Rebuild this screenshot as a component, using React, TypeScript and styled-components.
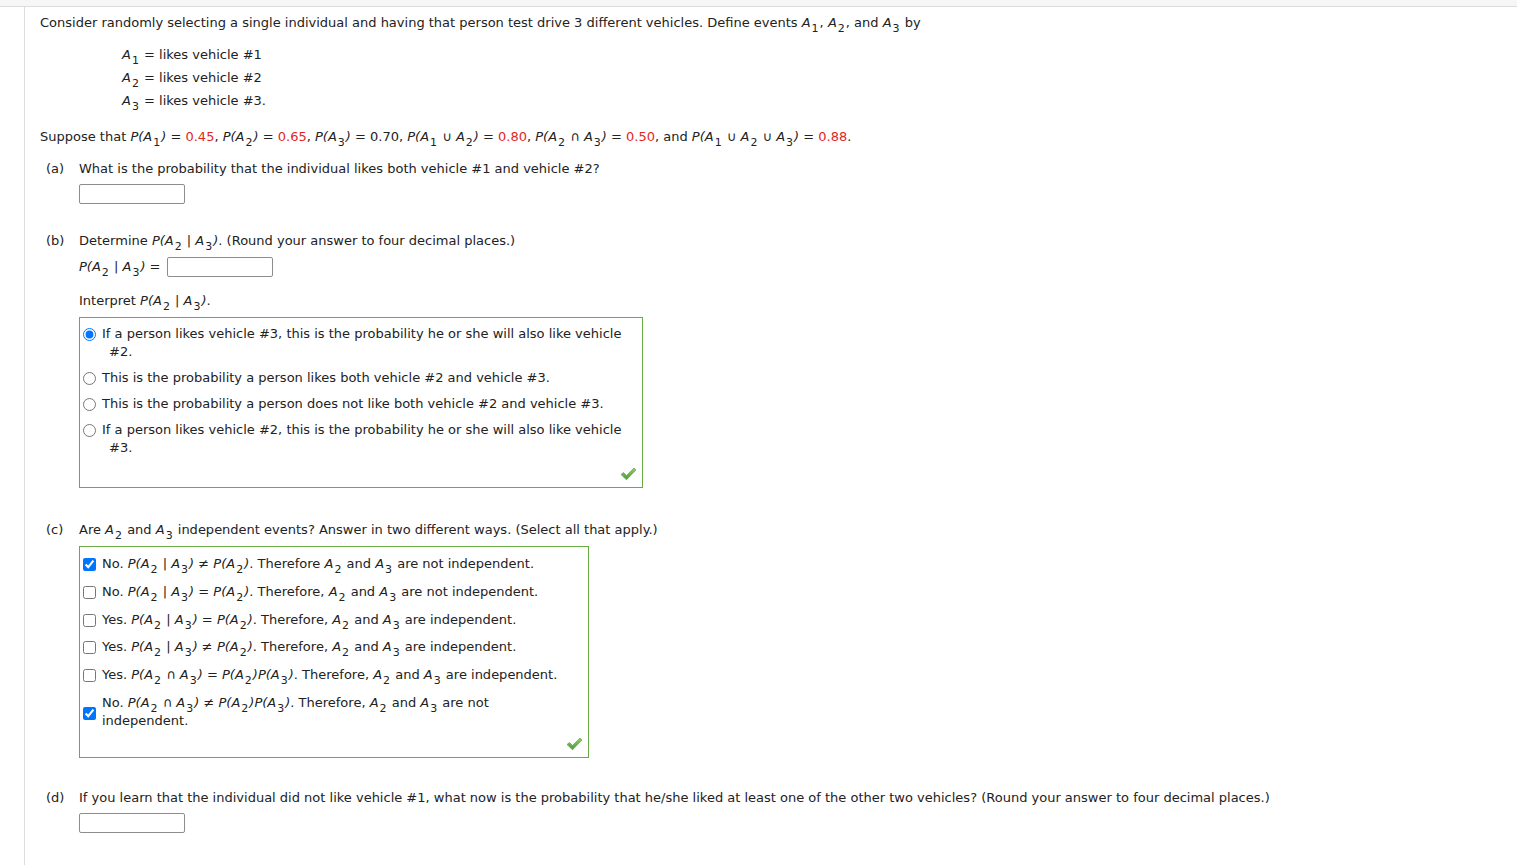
import React from 'react';
import styled, { createGlobalStyle } from 'styled-components';

const GlobalStyle = createGlobalStyle`
  html, body {
    margin: 0;
    padding: 0;
    background: #fff;
  }
  body {
    font-family: Verdana, "DejaVu Sans", sans-serif;
    font-size: 13px;
    color: #222;
  }
`;

const colours = {
  text: '#222',
  red: '#e4261f',
  rule: '#dcdcdc',
  green: '#6aab45',
};

const TopBar = styled.div`
  height: 6px;
  background: #f6f6f6;
  border-bottom: 1px solid ${colours.rule};
`;

const Layout = styled.div`
  display: flex;
  min-height: calc(100vh - 7px);
`;

const Sidebar = styled.div`
  width: 24px;
  flex: none;
  border-right: 1px solid ${colours.rule};
`;

const Main = styled.div`
  flex: 1;
  padding: 7px 0 0 15px;
`;

const Para = styled.p`
  margin: 0;
  line-height: 18px;
`;

const Defs = styled.div`
  margin: 11px 0 0 82px;
  line-height: 23px;
`;

interface GapProps {
  top: number;
}

const Block = styled.div<GapProps>`
  margin-top: ${(p) => p.top}px;
  line-height: 18px;
`;

const Part = styled.div<GapProps>`
  display: grid;
  grid-template-columns: 33px 1fr;
  padding-left: 6px;
  margin-top: ${(p) => p.top}px;
  line-height: 18px;
`;

const PartLabel = styled.div``;

const PartBody = styled.div`
  display: flex;
  flex-direction: column;
  align-items: flex-start;
`;

const Answer = styled.input.attrs({ type: 'text' })`
  box-sizing: border-box;
  width: 106px;
  height: 20px;
  margin: 0;
  border: 1px solid #8d8d8d;
  border-radius: 2px;
  background: #fff;
`;

const Row = styled.div<GapProps>`
  display: flex;
  align-items: center;
  gap: 6px;
  margin-top: ${(p) => p.top}px;
`;

const I = styled.span`
  font-style: italic;
`;

const Sub = styled.sub`
  font-size: 11px;
  font-style: normal;
  vertical-align: -5px;
  line-height: 0;
  margin: 0 1px 0 1px;
`;

const Red = styled.span`
  color: ${colours.red};
`;

const ChoiceBox = styled.div<{ width: number; top: number; padTop: number }>`
  box-sizing: border-box;
  width: ${(p) => p.width}px;
  margin-top: ${(p) => p.top}px;
  border: 1px solid ${colours.green};
  padding: ${(p) => p.padTop}px 4px 6px 0;
  display: flex;
  flex-direction: column;
`;

const Option = styled.label<{ gap: number; centred?: boolean }>`
  display: flex;
  align-items: ${(p) => (p.centred ? 'center' : 'flex-start')};
  margin-bottom: ${(p) => p.gap}px;
  line-height: 18px;

  input {
    flex: none;
    width: 13px;
    height: 13px;
    margin: 3px 6px 0 3px;
  }
`;

const OptionText = styled.span`
  white-space: nowrap;
`;

const Carry = styled.span<{ indent: number }>`
  display: block;
  padding-left: ${(p) => p.indent}px;
`;

const Mark = styled.div`
  display: flex;
  justify-content: flex-end;
  padding-right: 1px;
  margin-top: 1px;
`;

const A = ({ n }: { n: number }) => (
  <>
    <I>A</I>
    <Sub>{n}</Sub>
  </>
);

const Cond = () => (
  <I>
    P(<A n={2} /> | <A n={3} />)
  </I>
);

const P = ({ n }: { n: number }) => (
  <I>
    P(<A n={n} />)
  </I>
);

const Inter = () => (
  <I>
    P(<A n={2} /> ∩ <A n={3} />)
  </I>
);

const Tick = () => (
  <svg width="17" height="14" viewBox="0 0 17 14">
    <defs>
      <linearGradient id="tk" x1="0" y1="0" x2="0" y2="1">
        <stop offset="0" stopColor="#8fd26a" />
        <stop offset="1" stopColor="#4c9a35" />
      </linearGradient>
    </defs>
    <path d="M1 7.5 L3.5 5.5 L6.5 8.5 L14 1 L16 3 L6.5 12.8 Z" fill="url(#tk)" stroke="#4f9a3a" strokeWidth="0.6" />
  </svg>
);

const App = () => {
  return (
    <>
      <GlobalStyle />
      <TopBar />
      <Layout>
        <Sidebar />
        <Main>
          <Para>
            Consider randomly selecting a single individual and having that person test drive 3 different vehicles.
            Define events <A n={1} />, <A n={2} />, and <A n={3} /> by
          </Para>

          <Defs>
            <div><A n={1} /> = likes vehicle #1</div>
            <div><A n={2} /> = likes vehicle #2</div>
            <div><A n={3} /> = likes vehicle #3.</div>
          </Defs>

          <Block top={16}>
            Suppose that <P n={1} /> = <Red>0.45</Red>, <P n={2} /> = <Red>0.65</Red>, <P n={3} /> = 0.70,{' '}
            <I>P(<A n={1} /> ∪ <A n={2} />)</I> = <Red>0.80</Red>, <Inter /> = <Red>0.50</Red>, and{' '}
            <I>P(<A n={1} /> ∪ <A n={2} /> ∪ <A n={3} />)</I> = <Red>0.88</Red>.
          </Block>

          <Part top={14}>
            <PartLabel>(a)</PartLabel>
            <PartBody>
              <div>What is the probability that the individual likes both vehicle #1 and vehicle #2?</div>
              <Row top={6}>
                <Answer />
              </Row>
            </PartBody>
          </Part>

          <Part top={28}>
            <PartLabel>(b)</PartLabel>
            <PartBody>
              <div>
                Determine <Cond />. (Round your answer to four decimal places.)
              </div>
              <Row top={7}>
                <span><Cond /> =</span>
                <Answer />
              </Row>
              <Row top={15}>
                <span>Interpret <Cond />.</span>
              </Row>
              <ChoiceBox width={564} top={7} padTop={7}>
                <Option gap={8}>
                  <input type="radio" name="interp" defaultChecked />
                  <OptionText>
                    If a person likes vehicle #3, this is the probability he or she will also like vehicle
                    <Carry indent={7}>#2.</Carry>
                  </OptionText>
                </Option>
                <Option gap={8}>
                  <input type="radio" name="interp" />
                  <OptionText>This is the probability a person likes both vehicle #2 and vehicle #3.</OptionText>
                </Option>
                <Option gap={8}>
                  <input type="radio" name="interp" />
                  <OptionText>This is the probability a person does not like both vehicle #2 and vehicle #3.</OptionText>
                </Option>
                <Option gap={9}>
                  <input type="radio" name="interp" />
                  <OptionText>
                    If a person likes vehicle #2, this is the probability he or she will also like vehicle
                    <Carry indent={7}>#3.</Carry>
                  </OptionText>
                </Option>
                <Mark>
                  <Tick />
                </Mark>
              </ChoiceBox>
            </PartBody>
          </Part>

          <Part top={33}>
            <PartLabel>(c)</PartLabel>
            <PartBody>
              <div>
                Are <A n={2} /> and <A n={3} /> independent events? Answer in two different ways. (Select all that apply.)
              </div>
              <ChoiceBox width={510} top={7} padTop={8}>
                <Option gap={10}>
                  <input type="checkbox" defaultChecked />
                  <OptionText>
                    No. <Cond /> ≠ <P n={2} />. Therefore <A n={2} /> and <A n={3} /> are not independent.
                  </OptionText>
                </Option>
                <Option gap={10}>
                  <input type="checkbox" />
                  <OptionText>
                    No. <Cond /> = <P n={2} />. Therefore, <A n={2} /> and <A n={3} /> are not independent.
                  </OptionText>
                </Option>
                <Option gap={9}>
                  <input type="checkbox" />
                  <OptionText>
                    Yes. <Cond /> = <P n={2} />. Therefore, <A n={2} /> and <A n={3} /> are independent.
                  </OptionText>
                </Option>
                <Option gap={10}>
                  <input type="checkbox" />
                  <OptionText>
                    Yes. <Cond /> ≠ <P n={2} />. Therefore, <A n={2} /> and <A n={3} /> are independent.
                  </OptionText>
                </Option>
                <Option gap={10}>
                  <input type="checkbox" />
                  <OptionText>
                    Yes. <Inter /> = <P n={2} /><P n={3} />. Therefore, <A n={2} /> and <A n={3} /> are independent.
                  </OptionText>
                </Option>
                <Option gap={6} centred>
                  <input type="checkbox" defaultChecked />
                  <OptionText>
                    No. <Inter /> ≠ <P n={2} /><P n={3} />. Therefore, <A n={2} /> and <A n={3} /> are not
                    <Carry indent={0}>independent.</Carry>
                  </OptionText>
                </Option>
                <Mark>
                  <Tick />
                </Mark>
              </ChoiceBox>
            </PartBody>
          </Part>

          <Part top={31}>
            <PartLabel>(d)</PartLabel>
            <PartBody>
              <div>
                If you learn that the individual did not like vehicle #1, what now is the probability that he/she liked at
                least one of the other two vehicles? (Round your answer to four decimal places.)
              </div>
              <Row top={6}>
                <Answer />
              </Row>
            </PartBody>
          </Part>
        </Main>
      </Layout>
    </>
  );
};

export default App;
